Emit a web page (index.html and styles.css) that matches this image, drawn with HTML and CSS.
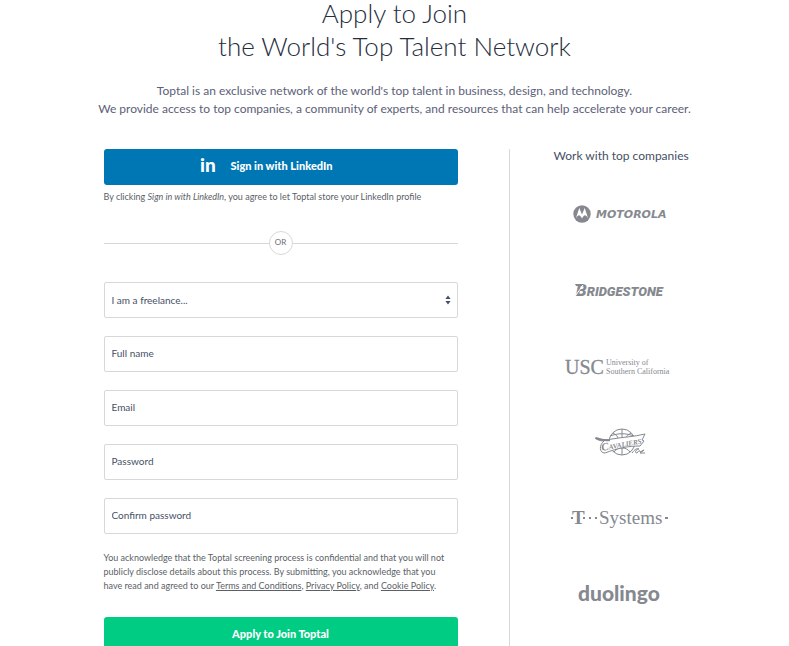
FILE: index.html
```html
<!DOCTYPE html>
<html lang="en">
<head>
    <meta charset="UTF-8">
    <meta name="viewport" content="width=device-width,initial-scale=1.0">
    <title>Apply to Join Toptal</title>
    <link rel="stylesheet" href="styles.css">
</head>
<body>
    <main class="page">
        <header class="intro">
            <h1>Apply to Join<br>the World's Top Talent Network</h1>
            <p>Toptal is an exclusive network of the world's top talent in business, design, and technology.<br>
            We provide access to top companies, a community of experts, and resources that can help accelerate your career.</p>
        </header>
        <div class="columns">
            <form class="apply-form" action="#" method="post">
                <button class="btn btn-linkedin" type="button">
                    <svg width="16" height="26" viewBox="0 0 16 26" fill="#fff" aria-hidden="true">
                        <text class="linkedin" x="0" y="19">in</text>
                    </svg>
                    <span>Sign in with LinkedIn</span>
                </button>
                <p class="note">By clicking <em>Sign in with LinkedIn</em>, you agree to let Toptal store your LinkedIn profile</p>
                <div class="divider"><span>OR</span></div>
                <div class="fields">
                    <div class="select">
                        <select name="role" aria-label="I am a freelance...">
                            <option>I am a freelance...</option>
                            <option>Developer</option>
                            <option>Designer</option>
                            <option>Finance Expert</option>
                        </select>
                        <svg class="arrows" width="6" height="10" viewBox="0 0 6 10" fill="#455065" aria-hidden="true">
                            <path d="M3 .5 5.600 4H.4zM3 9.500.4 6h5.200z"/>
                        </svg>
                    </div>
                    <input type="text" name="name" placeholder="Full name" aria-label="Full name">
                    <input type="email" name="email" placeholder="Email" aria-label="Email">
                    <input type="password" name="password" placeholder="Password" aria-label="Password">
                    <input type="password" name="confirm" placeholder="Confirm password" aria-label="Confirm password">
                </div>
                <p class="terms">You acknowledge that the Toptal screening process is confidential and that you will not publicly disclose details about this process. By submitting, you acknowledge that you have read and agreed to our <a href="#terms">Terms and Conditions</a>, <a href="#privacy">Privacy Policy</a>, and <a href="#cookies">Cookie Policy</a>.</p>
                <button class="btn btn-apply" type="submit">Apply to Join Toptal</button>
            </form>
            <aside class="companies">
                <h2>Work with top companies</h2>
                <ul>
                    <li>
                        <svg width="94" height="20" viewBox="0 0 94 20" role="img" aria-label="Motorola">
                            <circle cx="9" cy="10" r="8.700"/>
                            <path fill="#fff" d="M2.800 14.500 6.300 4l2.700 6.500L11.700 4l3.500 10.500c-.9-1.900-1.900-3-3-3.300-1.300.2-2.300 1.200-3.200 3.200-.9-2-1.900-3-3.200-3.200-1.100.3-2.100 1.400-3 3.300z"/>
                            <text class="motorola" x="23" y="14">MOTOROLA</text>
                        </svg>
                    </li>
                    <li>
                        <svg width="92" height="20" viewBox="0 0 92 20" role="img" aria-label="Bridgestone">
                            <text class="bridgestone" x="2" y="16"><tspan class="big">B</tspan>RIDGESTONE</text>
                            <path d="M1 4h6L6 6H2z"/>
                            <path fill="none" stroke="#fff" d="M9 5 2 15"/>
                        </svg>
                    </li>
                    <li>
                        <svg width="110" height="24" viewBox="0 0 110 24" role="img" aria-label="University of Southern California">
                            <text class="usc" x="0" y="20">USC</text>
                            <text class="usc-name" x="41" y="11">University of</text>
                            <text class="usc-name" x="41" y="20">Southern California</text>
                        </svg>
                    </li>
                    <li>
                        <svg width="52" height="30" viewBox="0 0 52 30" role="img" aria-label="Cavaliers">
                            <g fill="none" stroke="#85898f">
                                <circle cx="28" cy="15" r="13"/>
                                <path d="M28 2v9M19 6c3 2 5 3 5 6M37 6c-3 2-5 3-5 5M16 9c8-3 16-3 24 0M20 25c2-3 5-4 8-4s6 1 8 4M28 21v7"/>
                                <path fill="#fff" d="M1 11c8 2 12 2 17 1 11-2 21-2 33-5l-3 6 2 1-4 5c-12 0-22 2-35 7-6 0-6-8-1-12C7 14 3 13 1 11z"/>
                                <path stroke-width="2" d="M2 11c5 2 9 3 14 2"/>
                                <path d="M38 26c3-4 5-5 7-4-3 0-5 4-2 4 2-3 3-3 3-1l4-2-4 3 5 0"/>
                            </g>
                            <text class="cavaliers" transform="rotate(-11 8 24)" x="8" y="24"><tspan class="big">C</tspan>AVALIERS</text>
                        </svg>
                    </li>
                    <li>
                        <svg width="98" height="24" viewBox="0 0 98 24" role="img" aria-label="T-Systems">
                            <path d="M0 11h2v2H0zM12 11h2v2h-2zM18 11h2v2h-2zM24 11h2v2h-2zM94 11h3v2h-3z"/>
                            <text class="tsystems bold" x="1" y="18">T</text>
                            <text class="tsystems" x="28" y="18">Systems</text>
                        </svg>
                    </li>
                    <li>
                        <svg width="84" height="28" viewBox="0 0 84 28" role="img" aria-label="Duolingo">
                            <text class="duolingo" x="0" y="21">duolingo</text>
                        </svg>
                    </li>
                </ul>
            </aside>
        </div>
    </main>
</body>
</html>
```
FILE: styles.css
```css
* {
    box-sizing: border-box;
}
body {
    margin: 0;
    background: #fff;
    color: #455065;
    font-family: Lato, "Open Sans", sans-serif;
    font-size: 12px;
}
h1, h2, p, ul {
    margin: 0;
    padding: 0;
}
.page {
    max-width: 622px;
    margin: -3px auto 0;
    padding: 0 20px;
}
/* Heading */
.intro {
    text-align: center;
}
.intro h1 {
    color: #262d3d;
    font-size: 26px;
    font-weight: 300;
    line-height: 33px;
    white-space: nowrap;
}
.intro p {
    margin: 19px -20px 0;
    color: #5c6078;
    line-height: 18px;
}
/* Form and companies */
.columns {
    display: grid;
    grid-template-columns: minmax(0, 2fr) minmax(0, 1fr);
    gap: 51px;
    margin-top: 31px;
}
.btn {
    display: flex;
    align-items: center;
    justify-content: center;
    width: 100%;
    height: 36px;
    border: 0;
    border-radius: 3px;
    padding: 0 0 3px;
    color: #fff;
    font-family: inherit;
    font-size: 11px;
    font-weight: 900;
    cursor: pointer;
}
.btn-linkedin {
    gap: 14px;
    padding-right: 28px;
    background: #0077b5;
}
.btn-apply {
    margin-top: 24px;
    background: #00cc83;
}
.note,
.terms {
    color: #5c5f66;
    font-size: 9px;
    line-height: 14px;
}
.note {
    margin-top: 5px;
}
.divider {
    display: flex;
    align-items: center;
    margin-top: 27px;
    color: #6b6e75;
    font-size: 8px;
}
.divider::before,
.divider::after {
    content: "";
    flex: 1;
    height: 1px;
    background: #d8d8d8;
}
.divider span {
    width: 24px;
    height: 24px;
    border: 1px solid #d8d8d8;
    border-radius: 50%;
    line-height: 21px;
    text-align: center;
}
.fields {
    display: grid;
    gap: 18px;
    margin-top: 27px;
}
.fields input,
.fields select {
    display: block;
    width: 100%;
    height: 36px;
    border: 1px solid #d8d8d8;
    border-radius: 2px;
    padding: 0 7px;
    background: #fff;
    color: #455065;
    font-family: inherit;
    font-size: 10px;
    appearance: none;
}
.fields input {
    padding-bottom: 2px;
}
.fields input::placeholder {
    color: #455065;
    opacity: 1;
}
.select {
    position: relative;
}
.arrows {
    position: absolute;
    top: 13px;
    right: 7px;
    pointer-events: none;
}
.terms {
    margin-top: 17px;
    padding-right: 8px;
}
.terms a {
    color: inherit;
}
.companies {
    border-left: 1px solid #d8d8d8;
    padding-left: 44px;
    text-align: center;
}
.companies h2 {
    color: #455065;
    font-size: 12px;
    font-weight: 400;
    line-height: 14px;
    white-space: nowrap;
}
.companies ul {
    margin-top: 13px;
    list-style: none;
}
.companies li {
    display: flex;
    align-items: center;
    justify-content: center;
    height: 76px;
}
.companies svg {
    flex: none;
    fill: #85898f;
}
/* Logo lettering */
.linkedin {
    font: 900 19px Lato, sans-serif;
}
.motorola {
    font: italic bold 11px "DejaVu Sans", sans-serif;
}
.bridgestone {
    font: italic 900 13px Roboto, sans-serif;
}
.bridgestone .big {
    font-size: 17px;
}
.usc {
    font: 20px "Liberation Serif", serif;
    stroke: #85898f;
    stroke-width: 0.3;
}
.usc-name {
    font: 8px "Liberation Serif", serif;
}
.cavaliers {
    font: italic bold 7px "Liberation Serif", serif;
}
.cavaliers .big {
    font-size: 11px;
}
.tsystems {
    font: 19px "Liberation Serif", serif;
}
.tsystems.bold {
    font-weight: bold;
}
.duolingo {
    font: 900 21px Lato, sans-serif;
}
```
